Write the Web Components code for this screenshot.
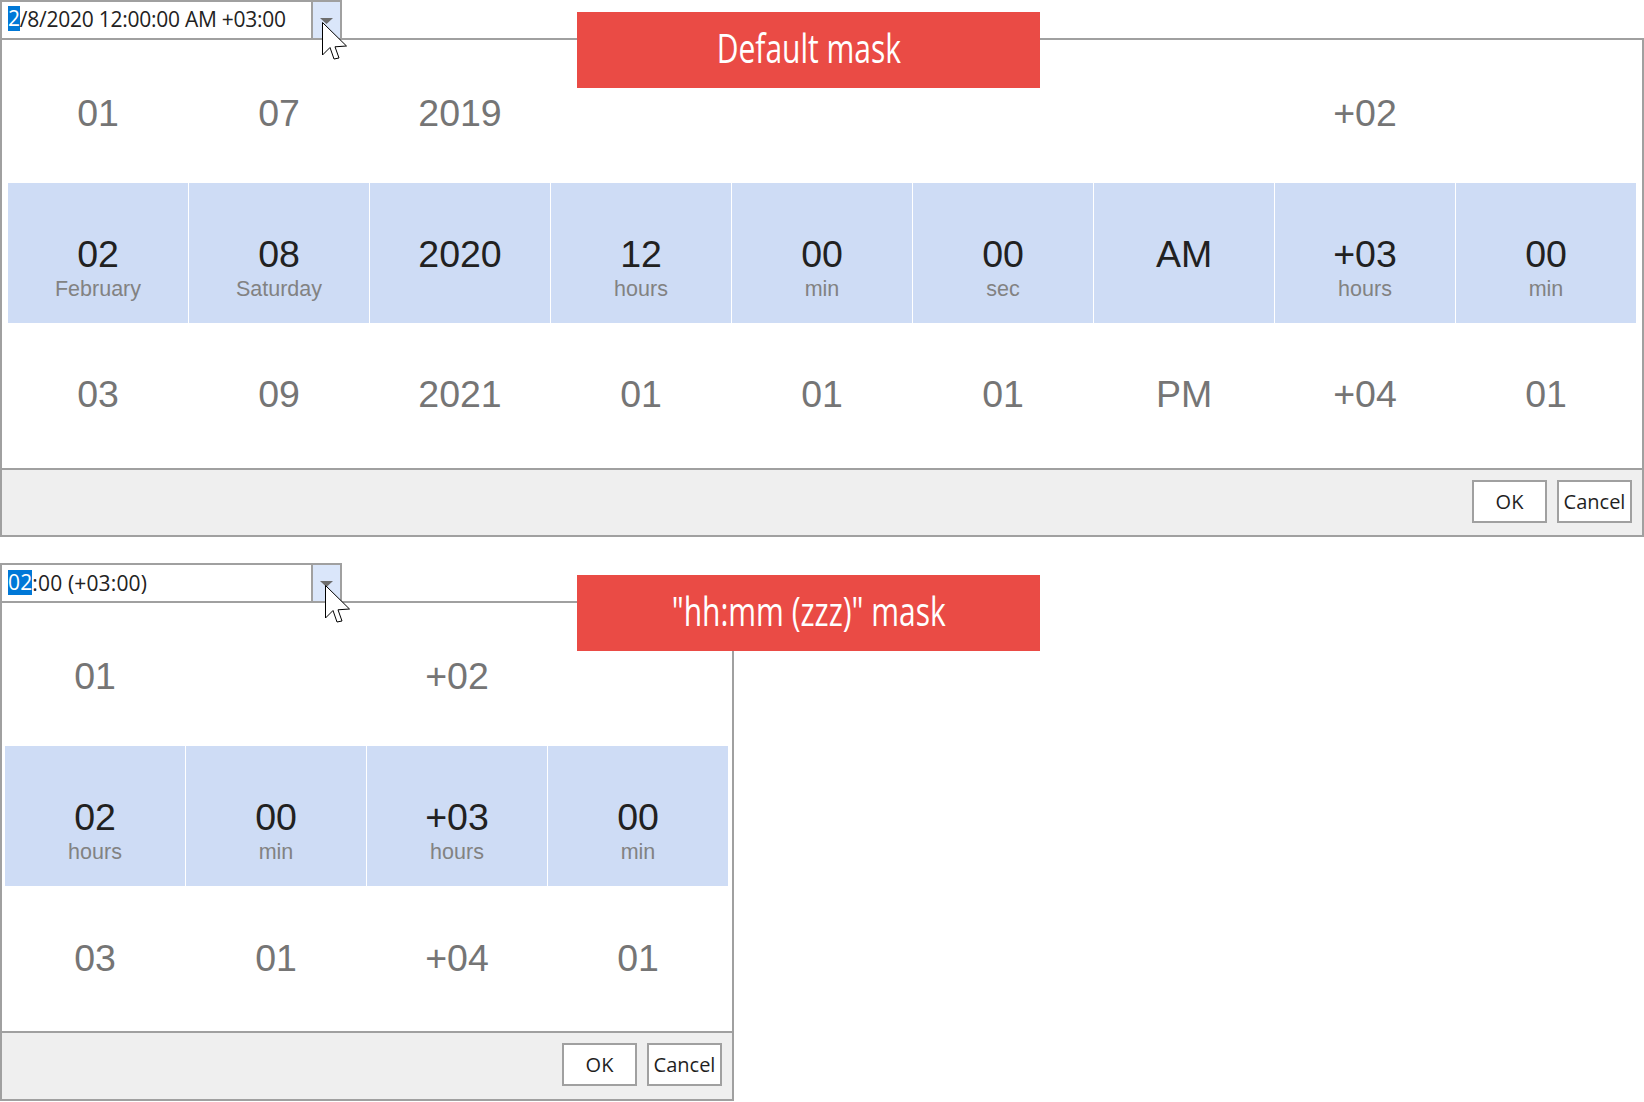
<!DOCTYPE html>
<html>
<head>
<meta charset="utf-8">
<title>Mask demo</title>
<style>
  html, body { margin: 0; background: #fff; }
  body { width: 1644px; height: 1102px; overflow: hidden; font-family: "Liberation Sans", Arial, sans-serif; }
</style>
</head>
<body>
<mask-demo label="Default mask" sel="2" rest="/8/2020 12:00:00 AM +03:00" width="1644" cursor="322">
  <picker-col top="01" val="02" unit="February" bottom="03"></picker-col>
  <picker-col top="07" val="08" unit="Saturday" bottom="09"></picker-col>
  <picker-col top="2019" val="2020" bottom="2021"></picker-col>
  <picker-col val="12" unit="hours" bottom="01"></picker-col>
  <picker-col val="00" unit="min" bottom="01"></picker-col>
  <picker-col val="00" unit="sec" bottom="01"></picker-col>
  <picker-col val="AM" bottom="PM"></picker-col>
  <picker-col top="+02" val="+03" unit="hours" bottom="+04"></picker-col>
  <picker-col val="00" unit="min" bottom="01"></picker-col>
</mask-demo>
<mask-demo class="second" label="&quot;hh:mm (zzz)&quot; mask" sel="02" rest=":00 (+03:00)" width="734" cursor="325">
  <picker-col top="01" val="02" unit="hours" bottom="03"></picker-col>
  <picker-col val="00" unit="min" bottom="01"></picker-col>
  <picker-col top="+02" val="+03" unit="hours" bottom="+04"></picker-col>
  <picker-col val="00" unit="min" bottom="01"></picker-col>
</mask-demo>

<script>
class PickerCol extends HTMLElement {
  constructor() {
    super();
    this.attachShadow({mode: "open"});
  }
  connectedCallback() {
    const top = this.getAttribute("top") || "";
    const val = this.getAttribute("val") || "";
    const unit = this.getAttribute("unit") || "";
    const bottom = this.getAttribute("bottom") || "";
    this.shadowRoot.innerHTML = `
    <style>
      :host { display: grid; grid-template-rows: 143px 140px 145px; text-align: center; }
      .item { display: flex; align-items: center; justify-content: center; box-sizing: border-box; font-size: 37.5px; line-height: 42px; color: #757575; }
      .before { padding-top: 2px; }
      .after { padding-bottom: var(--after-pad, 4px); }
      .current { background: #cedcf5; flex-direction: column; justify-content: flex-start; padding-top: 50px; color: #212121; }
      .unit { font-size: 21.5px; line-height: 24px; color: #828282; margin-top: 2px; }
    </style>
    <div class="item before">${top}</div>
    <div class="item current"><div>${val}</div><div class="unit">${unit}</div></div>
    <div class="item after">${bottom}</div>`;
  }
}
customElements.define("picker-col", PickerCol);

class PickerButton extends HTMLElement {
  constructor() {
    super();
    this.attachShadow({mode: "open"});
    this.shadowRoot.innerHTML = `
    <style>
      :host { display: flex; align-items: center; justify-content: center; width: 75px; height: 43px; box-sizing: border-box;
        border: 2px solid #a0a0a0; background: #fff; color: #1f1f1f; font: 20px "Open Sans", sans-serif; }
    </style>
    <slot></slot>`;
  }
}
customElements.define("picker-button", PickerButton);

class MaskField extends HTMLElement {
  constructor() {
    super();
    this.attachShadow({mode: "open"});
  }
  connectedCallback() {
    this.shadowRoot.innerHTML = `
    <style>
      :host { display: flex; width: 342px; height: 40px; box-sizing: border-box; border: 2px solid #a0a0a0; background: #fff; position: relative; z-index: 1; }
      .text { flex: 1; display: flex; align-items: center; padding: 0 0 var(--text-lift, 3px) 6px; font: 21px "Open Sans", sans-serif; letter-spacing: var(--text-spacing, -.25px); color: #222; white-space: pre; }
      .sel { background: #0078d7; color: #fff; line-height: 25px; }
      .drop { width: 27px; border-left: 2px solid #a0a0a0; background: #dae6fa; display: flex; justify-content: center; padding-top: 16px; }
      svg { display: block; }
    </style>
    <div class="text"><span class="sel">${this.getAttribute("sel")}</span><span>${this.getAttribute("rest")}</span></div>
    <div class="drop"><svg width="13" height="6" viewBox="0 0 13 6"><path d="M0 0H13L6.5 6Z" fill="#6e6e6e"/></svg></div>`;
  }
}
customElements.define("mask-field", MaskField);

class MaskDemo extends HTMLElement {
  constructor() {
    super();
    this.attachShadow({mode: "open"});
  }
  connectedCallback() {
    const n = this.children.length;
    this.shadowRoot.innerHTML = `
    <style>
      :host { display: block; position: relative; width: ${this.getAttribute("width")}px; }
      :host(.second) { margin-top: 26px; --text-lift: 1px; --text-spacing: .15px; --after-pad: 2px; }
      .popup { margin-top: -2px; box-sizing: border-box; border: 2px solid #a0a0a0; background: #fff; }
      .cols { display: grid; grid-template-columns: repeat(${n}, 1fr); column-gap: 1px; padding: 0 6px; }
      :host(.second) .cols { padding: 0 4px 0 3px; }
      .foot { height: 67px; box-sizing: border-box; border-top: 2px solid #a0a0a0; background: #efefef; display: flex; justify-content: flex-end; gap: 10px; padding: 10px 10px 0 0; }
      :host(.second) .foot { height: 68px; }
      .tag { position: absolute; left: 577px; top: 12px; width: 463px; height: 76px; box-sizing: border-box; padding-bottom: 5px; background: #ea4b45; color: #fff; display: flex; align-items: center; justify-content: center; z-index: 2; }
      .tag span { display: inline-block; font: 40px "Open Sans", sans-serif; transform: scaleX(.75); white-space: nowrap; }
      .cursor { position: absolute; left: ${this.getAttribute("cursor")}px; top: 22px; z-index: 3; }
    </style>
    <mask-field sel="${this.getAttribute("sel")}" rest="${this.getAttribute("rest")}"></mask-field>
    <div class="popup">
      <div class="cols"><slot></slot></div>
      <div class="foot"><picker-button>OK</picker-button><picker-button>Cancel</picker-button></div>
    </div>
    <div class="tag"><span>${this.getAttribute("label").replace(/"/g, "&quot;")}</span></div>
    <svg class="cursor" width="26" height="38" viewBox="0 0 26 38"><path d="M.5.5 24.5 24 13 24.8 17 36 12 37 8 25.5.5 33Z" fill="#fff" stroke="#000" stroke-width="1"/></svg>`;
  }
}
customElements.define("mask-demo", MaskDemo);
</script>
</body>
</html>
